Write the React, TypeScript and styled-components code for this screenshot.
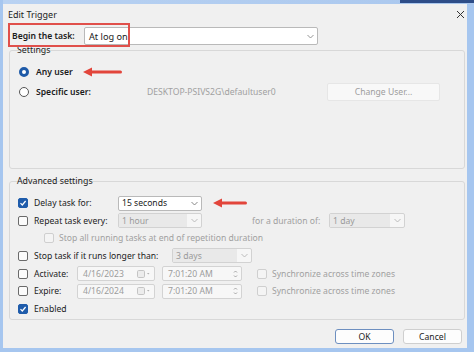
import React from "react";
import styled, { createGlobalStyle } from "styled-components";

const GlobalStyle = createGlobalStyle`
  html, body {
    margin: 0;
    padding: 0;
    background: #a6c6ef;
  }
  body {
    font-family: "Noto Sans", "Open Sans", sans-serif;
  }
`;

const Frame = styled.div`
  width: 474px;
  height: 352px;
  box-sizing: border-box;
  display: flex;
  flex-direction: column;
  background: #a6c6ef;
  padding: 0 7px 4px 3px;
`;

const TopStrip = styled.div`
  height: 4px;
  display: flex;
  justify-content: flex-end;
  margin-right: -7px;
  background: linear-gradient(90deg, #b9d2f2, #a9c7ee);
`;

const DarkTab = styled.div`
  width: 74px;
  height: 3px;
  background: #2d4d88;
`;

const Dialog = styled.div`
  flex: 1;
  display: flex;
  flex-direction: column;
  background: #f0f0f0;
  padding: 0 2px 0 5px;
  font-size: 8.6px;
  color: #1b1b1b;
`;

const TitleBar = styled.div`
  height: 20px;
  display: flex;
  align-items: center;
  justify-content: space-between;
  font-size: 9px;
  color: #222;
`;

const BeginRow = styled.div`
  position: relative;
  margin-top: 3px;
  height: 18px;
  display: flex;
  align-items: center;
`;

const HighlightBox = styled.div`
  position: absolute;
  left: 0;
  top: -4px;
  width: 122px;
  height: 24px;
  box-sizing: border-box;
  border: 2px solid #e0504b;
  pointer-events: none;
`;

const Label = styled.span<{ $w?: number; $muted?: boolean }>`
  flex: none;
  width: ${(p) => (p.$w ? `${p.$w}px` : "auto")};
  color: ${(p) => (p.$muted ? "#a3a3a3" : "#1b1b1b")};
  white-space: nowrap;
`;

const Select = styled.div<{ $w: number; $h?: number; $disabled?: boolean }>`
  flex: none;
  width: ${(p) => p.$w}px;
  height: ${(p) => p.$h ?? 15}px;
  box-sizing: border-box;
  display: flex;
  border: 1px solid ${(p) => (p.$disabled ? "#d2d2d2" : "#b9b9b9")};
  border-radius: 2px;
  background: ${(p) => (p.$disabled ? "#f6f6f6" : "#ffffff")};
  color: ${(p) => (p.$disabled ? "#9a9a9a" : "#1b1b1b")};
  overflow: hidden;
`;

const SelectText = styled.div<{ $disabled?: boolean }>`
  flex: 1;
  display: flex;
  align-items: center;
  padding-left: 3px;
  background: ${(p) => (p.$disabled ? "#e9e9e9" : "transparent")};
  white-space: nowrap;
`;

const SelectArrow = styled.div`
  width: 14px;
  display: flex;
  align-items: center;
  justify-content: center;
`;

const GroupBox = styled.div<{ $pb: number }>`
  margin-left: 1px;
  border: 1px solid #d8d8d8;
  border-radius: 3px;
  padding: 0 0 ${(p) => p.$pb}px 8px;
  display: flex;
  flex-direction: column;
`;

const GroupTitle = styled.div<{ $mb: number }>`
  margin: -7px 0 ${(p) => p.$mb}px -1px;
  height: 12px;
  line-height: 12px;
  font-size: 8.8px;
  color: #222;
`;

const Row = styled.div<{ $h: number; $indent?: number }>`
  height: ${(p) => p.$h}px;
  display: flex;
  align-items: center;
  padding-left: ${(p) => p.$indent ?? 0}px;
`;

const Radio = styled.span<{ $on?: boolean }>`
  flex: none;
  width: 10px;
  height: 10px;
  box-sizing: border-box;
  border-radius: 50%;
  border: ${(p) => (p.$on ? "3px solid #1e5aa8" : "1px solid #555")};
  background: #fff;
  margin: 0 7px 0 1px;
`;

const Check = styled.span<{ $on?: boolean; $disabled?: boolean; $gap?: number }>`
  flex: none;
  width: 10px;
  height: 10px;
  box-sizing: border-box;
  border-radius: 2px;
  border: 1px solid ${(p) => (p.$on ? "#1f5cab" : p.$disabled ? "#cfcfcf" : "#6a6a6a")};
  background: ${(p) => (p.$on ? "#1f5cab" : p.$disabled ? "#f4f4f4" : "#fbfbfb")};
  margin-right: ${(p) => p.$gap ?? 6}px;
  display: flex;
  align-items: center;
  justify-content: center;
`;

const Bold = styled.span`
  font-weight: 600;
`;

const MutedText = styled.span<{ $ml?: number }>`
  color: #a0a0a0;
  margin-left: ${(p) => p.$ml ?? 0}px;
  white-space: nowrap;
`;

const ChangeUser = styled.div`
  margin-left: auto;
  margin-right: 24px;
  width: 111px;
  height: 16px;
  display: flex;
  align-items: center;
  justify-content: center;
  background: #f8f8f8;
  border: 1px solid #e6e6e6;
  border-radius: 2px;
  color: #9d9d9d;
`;

const Field = styled.div<{ $w: number }>`
  flex: none;
  width: ${(p) => p.$w}px;
  height: 15px;
  box-sizing: border-box;
  border: 1px solid #d3d3d3;
  border-radius: 2px;
  background: #f7f7f7;
  color: #9c9c9c;
  display: flex;
  align-items: center;
  padding: 0 3px 0 5px;
  gap: 3px;
`;

const FieldText = styled.span`
  flex: 1;
  white-space: nowrap;
`;

const Spacer = styled.span<{ $w: number }>`
  flex: none;
  width: ${(p) => p.$w}px;
`;

const Footer = styled.div`
  margin-top: 9px;
  margin-right: 3px;
  display: flex;
  justify-content: flex-end;
  gap: 9px;
`;

const Button = styled.div<{ $default?: boolean }>`
  width: 59px;
  height: 15px;
  box-sizing: border-box;
  display: flex;
  align-items: center;
  justify-content: center;
  background: #fdfdfd;
  border: 1px solid ${(p) => (p.$default ? "#6d8fc0" : "#cfcfcf")};
  border-radius: 3px;
  color: #1b1b1b;
`;

const Chevron = ({ color = "#8a8a8a" }: { color?: string }) => (
  <svg width="7" height="5" viewBox="0 0 7 5">
    <polyline points="0.5,1 3.5,4 6.5,1" fill="none" stroke={color} strokeWidth="0.9" />
  </svg>
);

const CloseIcon = () => (
  <svg width="9" height="9" viewBox="0 0 9 9">
    <path d="M1 1 L8 8 M8 1 L1 8" stroke="#333" strokeWidth="1" />
  </svg>
);

const TickIcon = () => (
  <svg width="8" height="8" viewBox="0 0 8 8">
    <polyline points="1.5,4.2 3.3,6 6.6,2" fill="none" stroke="#fff" strokeWidth="1.2" />
  </svg>
);

const RedArrow = ({ w, ml }: { w: number; ml: number }) => (
  <svg width={w} height="10" viewBox={`0 0 ${w} 10`} style={{ marginLeft: ml, flex: "none" }}>
    <path d={`M7 5 L${w - 1.5} 5`} stroke="#e2453b" strokeWidth="3" strokeLinecap="round" />
    <path d="M0 5 L9 0.6 L9 9.4 Z" fill="#e2453b" />
  </svg>
);

const CalendarIcon = () => (
  <svg width="14" height="8" viewBox="0 0 14 8">
    <rect x="0.5" y="0.5" width="7" height="7" rx="1.2" fill="#ececec" stroke="#c4c4c4" />
    <path d="M10 3 L12.5 3 L11.25 4.6 Z" fill="#b0b0b0" />
  </svg>
);

const SpinIcon = () => (
  <svg width="5" height="10" viewBox="0 0 5 10">
    <path d="M1 3.5 L2.5 2 L4 3.5 M1 6.5 L2.5 8 L4 6.5" fill="none" stroke="#9a9a9a" strokeWidth="0.9" />
  </svg>
);

const Dropdown = ({ w, text, disabled }: { w: number; text: string; disabled?: boolean }) => (
  <Select $w={w} $disabled={disabled}>
    <SelectText $disabled={disabled}>{text}</SelectText>
    <SelectArrow>
      <Chevron color={disabled ? "#b5b5b5" : "#7a7a7a"} />
    </SelectArrow>
  </Select>
);

const DateTimeRow = ({ label, date }: { label: string; date: string }) => (
  <>
    <Check />
    <Label $w={43}>{label}</Label>
    <Field $w={78}>
      <FieldText>{date}</FieldText>
      <CalendarIcon />
    </Field>
    <Spacer $w={7} />
    <Field $w={80}>
      <FieldText>7:01:20 AM</FieldText>
      <SpinIcon />
    </Field>
    <Spacer $w={15} />
    <Check $disabled $gap={5} />
    <MutedText>Synchronize across time zones</MutedText>
  </>
);

export default function App() {
  return (
    <>
      <GlobalStyle />
      <Frame>
        <TopStrip>
          <DarkTab />
        </TopStrip>
        <Dialog>
          <TitleBar>
            <span>Edit Trigger</span>
            <CloseIcon />
          </TitleBar>

          <BeginRow>
            <HighlightBox />
            <Label $w={72} style={{ paddingLeft: 4 }}>
              <Bold>Begin the task:</Bold>
            </Label>
            <Select $w={234} $h={18}>
              <SelectText style={{ fontSize: 9.2, paddingLeft: 4 }}>At log on</SelectText>
              <SelectArrow>
                <Chevron />
              </SelectArrow>
            </Select>
          </BeginRow>

          <GroupBox $pb={67} style={{ marginTop: 5 }}>
            <GroupTitle $mb={7}>Settings</GroupTitle>
            <Row $h={18} style={{ marginBottom: 2 }}>
              <Radio $on />
              <Bold>Any user</Bold>
              <RedArrow w={39} ml={10} />
            </Row>
            <Row $h={18}>
              <Radio />
              <Label $w={111}>
                <Bold>Specific user:</Bold>
              </Label>
              <MutedText>DESKTOP-PSIVS2G\defaultuser0</MutedText>
              <ChangeUser>Change User...</ChangeUser>
            </Row>
          </GroupBox>

          <GroupBox $pb={0} style={{ marginTop: 12 }}>
            <GroupTitle $mb={7}>Advanced settings</GroupTitle>
            <Row $h={18}>
              <Check $on>
                <TickIcon />
              </Check>
              <Label $w={84}>Delay task for:</Label>
              <Dropdown w={84} text="15 seconds" />
              <RedArrow w={34} ml={11} />
            </Row>
            <Row $h={17}>
              <Check />
              <Label $w={84}>Repeat task every:</Label>
              <Dropdown w={84} text="1 hour" disabled />
              <MutedText $ml={50} style={{ width: 77 }}>
                for a duration of:
              </MutedText>
              <Dropdown w={76} text="1 day" disabled />
            </Row>
            <Row $h={18} $indent={26}>
              <Check $disabled $gap={5} />
              <MutedText>Stop all running tasks at end of repetition duration</MutedText>
            </Row>
            <Row $h={17}>
              <Check />
              <Label $w={138}>Stop task if it runs longer than:</Label>
              <Dropdown w={80} text="3 days" disabled />
            </Row>
            <Row $h={19}>
              <DateTimeRow label="Activate:" date="4/16/2023" />
            </Row>
            <Row $h={16}>
              <DateTimeRow label="Expire:" date="4/16/2024" />
            </Row>
            <Row $h={20}>
              <Check $on>
                <TickIcon />
              </Check>
              <Label>Enabled</Label>
            </Row>
          </GroupBox>

          <Footer>
            <Button $default>OK</Button>
            <Button>Cancel</Button>
          </Footer>
        </Dialog>
      </Frame>
    </>
  );
}
